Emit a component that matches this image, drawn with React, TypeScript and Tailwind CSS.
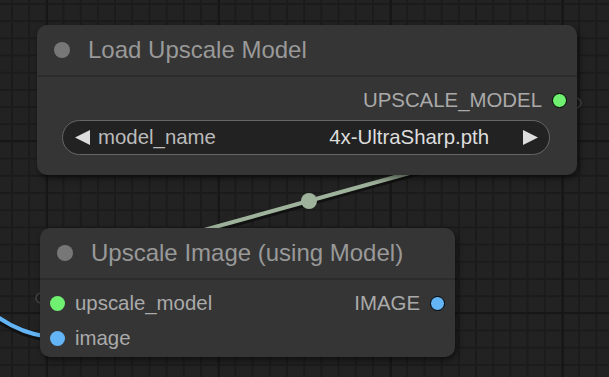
import React from "react";

type Slot = { name: string; color: string };

const Dot = ({ color, ring }: { color: string; ring?: boolean }) => (
  <span
    className={`inline-block w-[15px] h-[15px] rounded-full ${ring ? "border-[1.5px] border-black" : ""}`}
    style={{ backgroundColor: color }}
  />
);

const Arrow = ({ dir }: { dir: "left" | "right" }) => (
  <svg width="17" height="17" viewBox="0 0 17 17">
    {dir === "left" ? (
      <polygon points="16,1 16,16 1,8.5" fill="#dddddd" />
    ) : (
      <polygon points="1,1 1,16 16,8.5" fill="#dddddd" />
    )}
  </svg>
);

const NodeTitle = ({ title }: { title: string }) => (
  <div className="h-[52px] flex items-center gap-[18px] pl-[17px] border-b-2 border-[#2c2c2c]">
    <span className="w-[16px] h-[16px] rounded-full bg-[#777777]" />
    <span className="text-[24px] text-[#999999] leading-none">{title}</span>
  </div>
);

const Links = () => (
  <svg className="absolute inset-0" width="609" height="377" viewBox="0 0 609 377">
    {/* upscale model link */}
    <line x1="440" y1="164.5" x2="150" y2="245" stroke="#111111" strokeWidth="7" transform="translate(0,1.5)" />
    <line x1="440" y1="164.5" x2="150" y2="245" stroke="#9fb39c" strokeWidth="4" />
    <circle cx="309" cy="201" r="8" fill="#9fb39c" />
    {/* image link */}
    <path d="M -10 311 Q 15 332 48 337" fill="none" stroke="#111111" strokeWidth="7" transform="translate(0,1.5)" />
    <path d="M -10 311 Q 15 332 48 337" fill="none" stroke="#64b5f6" strokeWidth="4" />
    {/* link stubs at node edges */}
    <circle cx="576" cy="103" r="5" fill="#1e1e1e" stroke="#444444" strokeWidth="1.5" />
    <circle cx="41" cy="298" r="5" fill="#1e1e1e" stroke="#444444" strokeWidth="1.5" />
  </svg>
);

export default function App() {
  const inputs: Slot[] = [
    { name: "upscale_model", color: "#70f070" },
    { name: "image", color: "#64b5f6" },
  ];

  return (
    <div
      className="relative w-[609px] h-[377px] overflow-hidden bg-[#222222] bg-[image:linear-gradient(to_right,#171717_2px,transparent_2px),linear-gradient(to_bottom,#171717_2px,transparent_2px),linear-gradient(to_right,#1b1b1b_2px,transparent_2px),linear-gradient(to_bottom,#1b1b1b_2px,transparent_2px)] bg-[size:172px_172px,172px_172px,17.2px_17.2px,17.2px_17.2px] bg-[position:46px_140px,46px_140px,11px_3px,11px_3px]"
      style={{ fontFamily: '"Liberation Sans", Arial, sans-serif' }}
    >
      <Links />

      {/* Load Upscale Model */}
      <div className="absolute left-[37px] top-[25px] w-[540px] h-[150px] rounded-[10px] bg-[#353535] shadow-[2px_3px_6px_rgba(0,0,0,0.55)]">
        <NodeTitle title="Load Upscale Model" />
        <div className="pt-[6px]">
          <div className="h-[35px] flex items-center justify-end gap-[10px] pr-[10px]">
            <span className="text-[20.4px] text-[#aaaaaa] leading-none">UPSCALE_MODEL</span>
            <Dot color="#70f070" ring />
          </div>
          <div className="mt-[2px] ml-[25px] w-[488px] h-[35px] rounded-full bg-[#222222] border border-[#666666] flex items-center pl-[11px] pr-[10px]">
            <Arrow dir="left" />
            <span className="ml-[7px] text-[20.4px] text-[#bbbbbb] leading-none">model_name</span>
            <span className="ml-auto mr-[33px] text-[20.4px] text-[#dddddd] leading-none">4x-UltraSharp.pth</span>
            <Arrow dir="right" />
          </div>
        </div>
      </div>

      {/* Upscale Image (using Model) */}
      <div className="absolute left-[40px] top-[228px] w-[415px] h-[129px] rounded-[10px] bg-[#353535] shadow-[2px_3px_6px_rgba(0,0,0,0.55)]">
        <NodeTitle title="Upscale Image (using Model)" />
        <div className="pt-[6px] flex">
          <div className="flex flex-col">
            {inputs.map((s) => (
              <div key={s.name} className="h-[35px] flex items-center gap-[10px] pl-[10px]">
                <Dot color={s.color} />
                <span className="text-[20.4px] text-[#aaaaaa] leading-none">{s.name}</span>
              </div>
            ))}
          </div>
          <div className="ml-auto h-[35px] flex items-center gap-[10px] pr-[10px]">
            <span className="text-[20.4px] text-[#aaaaaa] leading-none">IMAGE</span>
            <Dot color="#64b5f6" ring />
          </div>
        </div>
      </div>
    </div>
  );
}
